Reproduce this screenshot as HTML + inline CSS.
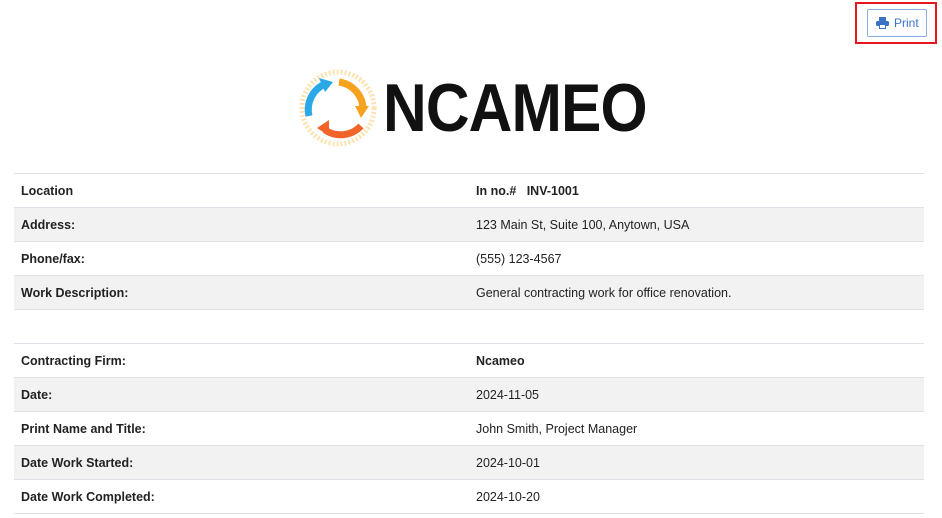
<!DOCTYPE html>
<html><head><meta charset="utf-8"><style>
body{margin:0;background:#fff;font-family:"Liberation Sans",sans-serif;width:942px;height:518px;overflow:hidden;position:relative;color:#222}
.red{position:absolute;left:855px;top:2px;width:78px;height:38px;border:2px solid #e8141e}
.btn{position:absolute;left:867px;top:9px;border:1px solid #8eaee0;border-radius:2px;color:#3b72c6;font-size:12px;line-height:26px;box-sizing:border-box;width:60px;height:28px;padding-left:26px}
.btn svg{position:absolute;left:8px;top:7px}
table{position:absolute;left:14px;width:910px;border-collapse:collapse;font-size:12.5px}
td{height:33px;border-top:1px solid #dee2e6;padding:0 7px;vertical-align:middle}
tr:last-child td{border-bottom:1px solid #dee2e6}
tr:nth-child(even) td{background:#f2f2f2}
td:first-child{font-weight:bold;width:441px}
.logo{position:absolute;left:383px;top:70px;font-weight:bold;font-size:68px;letter-spacing:-1px;transform:scaleX(0.89);transform-origin:left;color:#111;line-height:76px}
</style></head><body>
<div class="red"></div>
<div class="btn"><svg width="13" height="12" viewBox="0 0 13 12"><rect x="3" y="0" width="7" height="4" fill="#3b72c6"/><rect x="0" y="4" width="13" height="5" rx="1.5" fill="#3b72c6"/><rect x="3" y="7" width="7" height="5" fill="#3b72c6"/><rect x="4" y="8" width="5" height="3" fill="#fff"/></svg>Print</div>
<svg style="position:absolute;left:295px;top:68px" width="86" height="80" viewBox="0 0 86 80">
<circle cx="43" cy="40" r="36" fill="none" stroke="#fde3b0" stroke-width="5" stroke-dasharray="2 2"/>
<path d="M14 48 A28 28 0 0 1 30 16" fill="none" stroke="#2aa9e6" stroke-width="7"/>
<polygon points="24,10 38,14 30,24" fill="#2aa9e6"/>
<path d="M44 14 A28 28 0 0 1 68 40" fill="none" stroke="#f6a21e" stroke-width="7"/>
<polygon points="60,38 74,38 66,50" fill="#f6a21e"/>
<path d="M66 58 A28 28 0 0 1 30 62" fill="none" stroke="#f0642a" stroke-width="7"/>
<polygon points="22,60 34,52 34,68" fill="#f0642a"/>
</svg>
<div class="logo">NCAMEO</div>
<table style="top:173px">
<tr><td>Location</td><td><b>In no.# &nbsp; INV-1001</b></td></tr>
<tr><td>Address:</td><td>123 Main St, Suite 100, Anytown, USA</td></tr>
<tr><td>Phone/fax:</td><td>(555) 123-4567</td></tr>
<tr><td>Work Description:</td><td>General contracting work for office renovation.</td></tr>
</table>
<table style="top:343px">
<tr><td>Contracting Firm:</td><td><b>Ncameo</b></td></tr>
<tr><td>Date:</td><td>2024-11-05</td></tr>
<tr><td>Print Name and Title:</td><td>John Smith, Project Manager</td></tr>
<tr><td>Date Work Started:</td><td>2024-10-01</td></tr>
<tr><td>Date Work Completed:</td><td>2024-10-20</td></tr>
</table>
</body></html>
